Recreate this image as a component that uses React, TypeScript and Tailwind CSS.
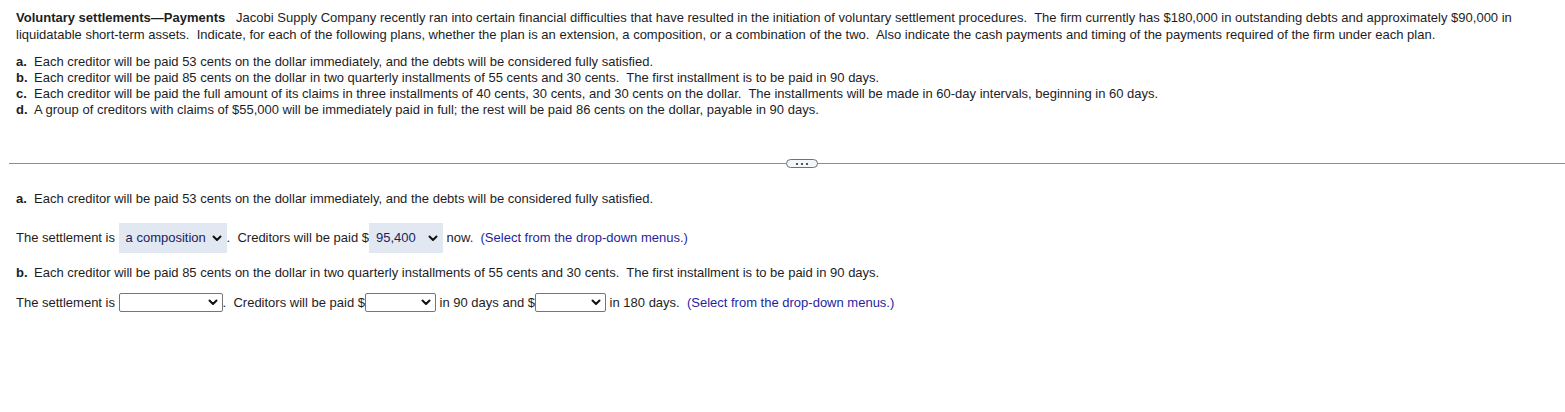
const font = "font-['Liberation_Sans',Arial,sans-serif]";

function Chevron() {
  return (
    <svg width="10" height="7" viewBox="0 0 10 7" className="shrink-0">
      <path d="M1.5 1.5 L5 5 L8.5 1.5" fill="none" stroke="#111" strokeWidth="2" strokeLinecap="round" strokeLinejoin="round" />
    </svg>
  );
}

function FilledSelect({ value, w }: { value: string; w: string }) {
  return (
    <span className={`inline-flex h-[30px] ${w} items-center justify-between gap-[4px] bg-[#e2e8f1] pl-[7px] pr-[5px] text-[#1c1c5a]`}>
      <span>{value}</span>
      <Chevron />
    </span>
  );
}

function EmptySelect({ w }: { w: string }) {
  return (
    <span className={`inline-flex h-[19px] ${w} items-center justify-end rounded-[2px] border border-[#767676] bg-white pr-[4px]`}>
      <Chevron />
    </span>
  );
}

const plans = [
  ["a.", "Each creditor will be paid 53 cents on the dollar immediately, and the debts will be considered fully satisfied."],
  ["b.", "Each creditor will be paid 85 cents on the dollar in two quarterly installments of 55 cents and 30 cents.  The first installment is to be paid in 90 days."],
  ["c.", "Each creditor will be paid the full amount of its claims in three installments of 40 cents, 30 cents, and 30 cents on the dollar.  The installments will be made in 60-day intervals, beginning in 60 days."],
  ["d.", "A group of creditors with claims of $55,000 will be immediately paid in full; the rest will be paid 86 cents on the dollar, payable in 90 days."],
];

export default function App() {
  return (
    <div className={`${font} h-[412px] w-[1565px] bg-white text-[13px] text-[#1d1d1f]`}>
      <div className="px-[16px] pt-[9px]">
        <p className="leading-[17px] whitespace-pre-wrap">
          <b>Voluntary settlements—Payments</b>
          {"   Jacobi Supply Company recently ran into certain financial difficulties that have resulted in the initiation of voluntary settlement procedures.  The firm currently has $180,000 in outstanding debts and approximately $90,000 in liquidatable short-term assets.  Indicate, for each of the following plans, whether the plan is an extension, a composition, or a combination of the two.  Also indicate the cash payments and timing of the payments required of the firm under each plan."}
        </p>
        <ul className="mt-[11px] leading-[16px]">
          {plans.map(([k, t]) => (
            <li key={k} className="flex whitespace-pre-wrap">
              <b className="w-[18px]">{k}</b>
              <span>{t}</span>
            </li>
          ))}
        </ul>
      </div>

      {/* divider with collapse pill */}
      <div className="relative mt-[45px] ml-[9px] flex items-center">
        <div className="h-px flex-1 bg-[#8a8f96]" />
        <span className="absolute left-[777px] top-[-4px] flex h-[9px] w-[32px] items-center justify-center gap-[3px] rounded-full border border-[#6b7380] bg-[#f4f6f9]">
          <i className="h-[2px] w-[2px] bg-[#4b5563]" />
          <i className="h-[2px] w-[2px] bg-[#4b5563]" />
          <i className="h-[2px] w-[2px] bg-[#4b5563]" />
        </span>
      </div>

      <div className="px-[16px] pt-[27px]">
        <p className="flex whitespace-pre-wrap leading-[16px]">
          <b className="w-[18px]">a.</b>
          <span>{plans[0][1]}</span>
        </p>
        <div className="mt-[16px] flex items-center whitespace-pre">
          <span>The settlement is </span>
          <FilledSelect value="a composition" w="w-[108px]" />
          <span>.  Creditors will be paid $</span>
          <FilledSelect value="95,400" w="w-[74px]" />
          <span> now.  </span>
          <span className="text-[#1f1fa0]">(Select from the drop-down menus.)</span>
        </div>
        <p className="mt-[12px] flex whitespace-pre-wrap leading-[16px]">
          <b className="w-[18px]">b.</b>
          <span>{plans[1][1]}</span>
        </p>
        <div className="mt-[12px] flex items-center whitespace-pre">
          <span>The settlement is </span>
          <EmptySelect w="w-[104px]" />
          <span>.  Creditors will be paid $</span>
          <EmptySelect w="w-[71px]" />
          <span> in 90 days and $</span>
          <EmptySelect w="w-[71px]" />
          <span> in 180 days.  </span>
          <span className="text-[#1f1fa0]">(Select from the drop-down menus.)</span>
        </div>
      </div>
    </div>
  );
}
